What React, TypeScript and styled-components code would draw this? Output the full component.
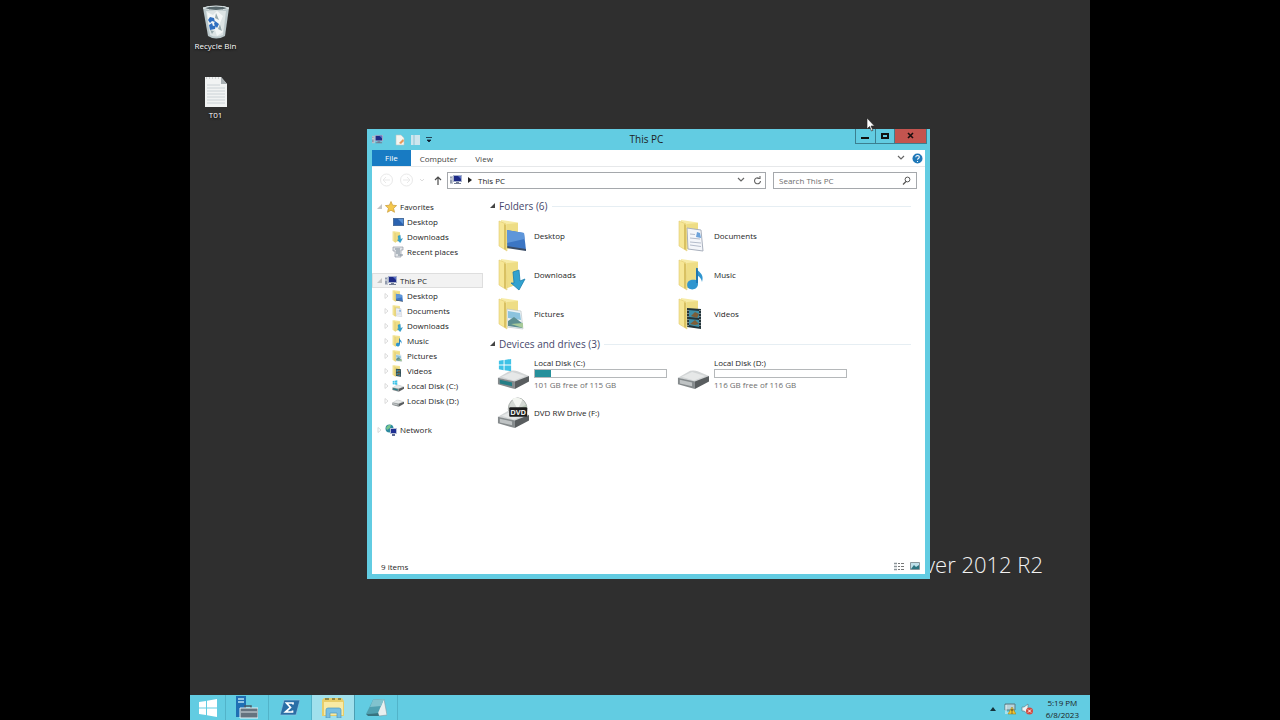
import React from 'react';
import styled, { createGlobalStyle } from 'styled-components';

const aero = '#62cce2';
const ink = '#1d1d1d';

const GlobalStyle = createGlobalStyle`
  * { box-sizing: border-box; }
  body { margin: 0; background: #000; font-family: "Open Sans", "Noto Sans", sans-serif; font-size: 8px; color: ${ink}; }
  button, input { font: inherit; color: inherit; }
  button { border: 0; padding: 0; background: none; }
  svg { display: block; flex: none; }
  ul { list-style: none; margin: 0; padding: 0; }
`;

const Screen = styled.div`
  display: flex;
  justify-content: center;
  height: 100vh;
`;

const Desktop = styled.main`
  position: relative;
  display: flex;
  flex-direction: column;
  height: 100%;
  aspect-ratio: 5 / 4;
  background: #2f2f2f;
  overflow: hidden;
`;

const Wallpaper = styled.div`
  position: absolute;
  right: 47px;
  bottom: 140px;
  font-size: 22px;
  line-height: 32px;
  font-weight: 300;
  white-space: nowrap;
  color: #f2f2f2;
`;

const Shortcuts = styled.div`
  flex: 1;
  display: flex;
  flex-direction: column;
  align-items: flex-start;
  gap: 20px;
  padding: 4px 0 0;
`;

const Shortcut = styled.button`
  display: flex;
  flex-direction: column;
  align-items: center;
  width: 51px;
  height: 49px;
  line-height: 12px;
  color: #fff;
  text-shadow: 0 1px 2px #000;
`;

const Win = styled.section`
  position: absolute;
  top: 129px;
  right: 160px;
  bottom: 141px;
  left: 177px;
  display: flex;
  flex-direction: column;
  padding: 0 5px 5px;
  background: ${aero};
`;

const TitleBar = styled.header`
  display: flex;
  flex: none;
  height: 21px;
`;

const QuickBar = styled.div`
  display: flex;
  align-items: center;
  gap: 6px;
  width: 66px;
`;

const Separator = styled.span`
  width: 1px;
  height: 8px;
  background: #52b0c6;
`;

const Title = styled.h1`
  flex: 1;
  margin: 0;
  font-size: 10px;
  line-height: 21px;
  font-weight: 400;
  text-align: center;
`;

const Controls = styled.div`
  display: flex;
  width: 72px;
  height: 15px;
  margin-right: -2px;
  border: 1px solid #3b7f90;
  border-top: 0;
`;

const Control = styled.button<{ $close?: boolean }>`
  display: flex;
  align-items: center;
  justify-content: center;
  flex: ${p => (p.$close ? 5 : 3)};
  background: ${p => (p.$close ? '#c3544f' : 'transparent')};
  & + & { border-left: 1px solid #3b7f90; }
`;

const Client = styled.div`
  flex: 1;
  min-height: 0;
  display: flex;
  flex-direction: column;
  background: #fff;
`;

const Ribbon = styled.nav`
  display: flex;
  align-items: center;
  flex: none;
  height: 17px;
  border-bottom: 1px solid #e6e8ea;
`;

const Tab = styled.button<{ $file?: boolean }>`
  height: 16px;
  padding: 0 ${p => (p.$file ? 13 : 9)}px;
  line-height: ${p => (p.$file ? 16 : 18)}px;
  background: ${p => (p.$file ? '#187bc3' : 'transparent')};
  color: ${p => (p.$file ? '#fff' : '#444')};
`;

const Spacer = styled.span`
  flex: 1;
`;

const IconButton = styled.button<{ $narrow?: boolean }>`
  display: flex;
  align-items: center;
  justify-content: center;
  width: ${p => (p.$narrow ? 8 : 16)}px;
  height: 16px;
`;

const AddressRow = styled.div`
  display: flex;
  align-items: center;
  flex: none;
  height: 26px;
  padding: 0 8px 0 6px;
`;

const Navigation = styled.div`
  display: flex;
  align-items: center;
  width: 69px;
  gap: 4px;
`;

const AddressBox = styled.div`
  display: flex;
  align-items: center;
  flex: 1;
  height: 17px;
  padding-left: 2px;
  border: 1px solid #a5a8ac;
`;

const Crumb = styled.button`
  padding: 0;
`;

const SearchBox = styled.label`
  display: flex;
  align-items: center;
  width: 144px;
  height: 17px;
  margin-left: 7px;
  padding: 0 5px;
  border: 1px solid #a5a8ac;
`;

const SearchInput = styled.input`
  flex: 1;
  min-width: 0;
  padding: 0;
  border: 0;
  outline: 0;
  background: none;
  &::placeholder { color: #6d6d6d; opacity: 1; }
`;

const Body = styled.div`
  flex: 1;
  min-height: 0;
  display: flex;
`;

const Sidebar = styled.nav`
  display: flex;
  flex-direction: column;
  flex: none;
  gap: 14px;
  width: 111px;
  padding-top: 6px;
`;

const TreeRow = styled.button<{ $child?: boolean; $selected?: boolean }>`
  display: flex;
  align-items: center;
  gap: 3px;
  width: 100%;
  height: 15px;
  padding-left: ${p => (p.$child ? 12 : 5)}px;
  white-space: nowrap;
  background: ${p => (p.$selected ? '#f2f2f2' : 'transparent')};
  box-shadow: ${p => (p.$selected ? 'inset 0 0 0 1px #dedede' : 'none')};
`;

const TreeIcon = styled.span`
  display: flex;
  align-items: center;
`;

const Content = styled.div`
  display: flex;
  flex-direction: column;
  gap: 1px;
  flex: 1;
  padding: 3px 14px 0 7px;
`;

const GroupHeader = styled.h2`
  display: flex;
  align-items: center;
  gap: 4px;
  height: 20px;
  margin: 0;
  font-size: 10px;
  font-weight: 400;
  color: #45476b;
  &::after { content: ""; flex: 1; height: 1px; background: #e6eef3; }
`;

const Tiles = styled.div`
  display: grid;
  grid-template-columns: repeat(auto-fill, 180px);
  grid-auto-rows: 39px;
  padding-left: 7px;
`;

const Tile = styled.button`
  display: flex;
  align-items: center;
  gap: 5px;
  text-align: left;
`;

const DriveText = styled.span`
  display: flex;
  flex-direction: column;
  gap: 1px;
  width: 133px;
  line-height: 11px;
`;

const Gauge = styled.span`
  height: 9px;
  border: 1px solid #b5b8ba;
  background: #fff;
`;

const GaugeFill = styled.span`
  display: block;
  height: 100%;
  background: #26909b;
`;

const Muted = styled.span`
  color: #6e6e6e;
`;

const StatusBar = styled.footer`
  display: flex;
  align-items: center;
  flex: none;
  height: 16px;
  padding: 0 2px 0 9px;
`;

const Taskbar = styled.footer`
  display: flex;
  flex: none;
  height: 25px;
  background: ${aero};
`;

const TaskButton = styled.button<{ $start?: boolean; $active?: boolean }>`
  display: flex;
  align-items: center;
  justify-content: center;
  width: ${p => (p.$start ? 36 : 43)}px;
  border-right: 1px solid ${p => (p.$active ? '#4b9fb3' : '#52b3c9')};
  background: ${p => (p.$active ? '#a0e0ec' : 'transparent')};
`;

const Tray = styled.div`
  display: flex;
  align-items: center;
  padding: 3px 11px 0 0;
`;

const TrayButton = styled.button`
  display: flex;
  align-items: center;
  justify-content: center;
  width: 17px;
  height: 20px;
`;

const Clock = styled.time`
  display: flex;
  flex-direction: column;
  align-items: center;
  margin-left: 10px;
  line-height: 12px;
`;

const Pointer = styled.svg`
  position: absolute;
  top: 117px;
  left: 676px;
`;

type Kind = 'desktop' | 'documents' | 'downloads' | 'music' | 'pictures' | 'videos';

const FolderIcon = ({ kind, size = 32 }: { kind: Kind; size?: number }) => (
  <svg width={size} height={size} viewBox="0 0 32 32" aria-hidden="true">
    <path d="M4 0 21 2.500V25L10 29 4 26Z" fill="#f7eba6" />
    <path d="M10 4 21 3V25L10 29Z" fill="#eedd85" />
    {kind === 'desktop' && (
      <>
        <path d="M10 10 27 13 29 30 10 27Z" fill="#3c76c4" />
        <path d="M10 10 27 13 27.500 19 10 23Z" fill="#5e96da" />
        <path d="M10 26 29 29V31L10 28Z" fill="#3a4c66" />
      </>
    )}
    {kind === 'documents' && (
      <>
        <path d="M10 8 24 10 26 31 11 29Z" fill="#f4f6fa" stroke="#a9b0bd" />
        <path d="M13 14 18 14.500M13 18 23 19M13 22 24 23M13 25 24 26.500" stroke="#b4bccb" fill="none" />
        <path d="m20 12 3 1 1 5-5-1Z" fill="#6ca2da" />
      </>
    )}
    {kind === 'downloads' && (
      <path d="M16 13 22 11 23 22 28 20 22 31 14 24 17 24Z" fill="#31a2cf" stroke="#1b7fae" strokeWidth=".8" />
    )}
    {kind === 'music' && (
      <>
        <path d="M19 8c1 5 9 6 6 15-1-5-4-6-4-6v8c0 7-11 7-11 1 0-5 5-6 9-5Z" fill="#3096d0" />
        <path d="M20 9v15" stroke="#1d6ea8" strokeWidth="1.500" />
      </>
    )}
    {kind === 'pictures' && (
      <>
        <path d="M10 11 24 13 26 31 10 29Z" fill="#eef3f5" stroke="#b7c1c6" strokeWidth=".6" />
        <path d="M11 13 23 15 24 22 11 20Z" fill="#8cc3de" />
        <path d="m11 23 6-4 8 6v5l-14-2Z" fill="#5d8f91" />
        <path d="M14 26 26 25V30Z" fill="#a8cb9a" />
      </>
    )}
    {kind === 'videos' && (
      <>
        <path d="M10 10 24 11V31L10 29Z" fill="#23343a" />
        <path d="M12 12 22 13V20L12 19ZM12 21 22 22V29L12 27Z" fill="#3e8fa8" />
        <path d="m14 18 4-4 4 2-2 4ZM13 26l5-4 4 4-4 1Z" fill="#7d5e38" />
        <path d="M11 12V29M23 12V30" stroke="#cfd8da" strokeDasharray="1 2" />
      </>
    )}
    <path d="M2 1 9 4 10 31 2 26Z" fill="#f6e695" stroke="#e0cb70" strokeWidth=".6" />
    <path d="M7 4 9 5V30L7 29Z" fill="#d9c162" />
  </svg>
);

const WindowsFlag = () => (
  <path d="M0 2 5 1V6H0ZM6 1 13 0V6H6ZM0 7H5V12L0 11ZM6 7H13V13L6 12Z" fill="#3fc2e6" />
);

const DriveIcon = ({ kind, size = 34 }: { kind: 'c' | 'd' | 'dvd'; size?: number }) => (
  <svg width={size} height={size} viewBox="0 0 34 34" aria-hidden="true">
    {kind === 'dvd' && (
      <>
        <ellipse cx="22" cy="13" rx="10" ry="12" fill="#d3d8d3" stroke="#a4aaa6" />
        <path d="M22 13 16 2q6-3 11 1Z" fill="#f3f6f1" />
        <path d="M22 13 31 8q2 5 0 10Z" fill="#b7c6b7" />
      </>
    )}
    <path d="M1 21 14 13.500Q19 13 22 14L34 19 19 26Z" fill="#d2d5d6" />
    <path d="M5 20 16 15 30 19 18 24Z" fill="#e6e8e8" />
    <path d="M1 21 19 25V33L1 28Z" fill="#858a8c" />
    <path d="M19 25 34 19V25L19 33Z" fill="#595d5f" />
    <path d="M3 23 16 26V30L3 27Z" fill={kind === 'c' ? '#247e86' : '#bfc3c4'} />
    {kind === 'c' && <g transform="translate(2 1)"><WindowsFlag /></g>}
    {kind === 'dvd' && (
      <>
        <rect x="13" y="11" width="19" height="10" rx="1" fill="#1b1b1b" />
        <text x="22.500" y="19" textAnchor="middle" fontSize="8" fontWeight="700" fill="#eee">DVD</text>
      </>
    )}
  </svg>
);

const ComputerIcon = ({ size = 12 }: { size?: number }) => (
  <svg width={size} height={size} viewBox="0 0 12 12" aria-hidden="true">
    <path d="M0 2h3v8H0Z" fill="#c3c8d2" />
    <path d="M1 3v1M1 6v3" stroke="#63708a" />
    <path d="M3 1h9v7H3Z" fill="#a7b1cc" />
    <path d="M4 2h7v5H4Z" fill="#1d2a86" />
    <path d="M8 2h3v3Z" fill="#5a70c4" />
    <path d="M6 8h3v1h2v1H4V9h2Z" fill="#727c94" />
  </svg>
);

const StarIcon = () => (
  <svg width="12" height="12" viewBox="0 0 12 12" aria-hidden="true">
    <path d="m6 .5 1.600 3.700 4 .4-3 2.700.9 4L6 9.200l-3.500 2.100.9-4-3-2.700 4-.4Z" fill="#f5c84c" stroke="#c99a35" strokeWidth=".7" />
  </svg>
);

const ScreenIcon = () => (
  <svg width="12" height="12" viewBox="0 0 12 12" aria-hidden="true">
    <path d="M1 2h11v8H1Z" fill="#4b6f9f" />
    <path d="M2 3h9v6H2Z" fill="#2a62b0" />
    <path d="M6 3h5v5Z" fill="#5b93d8" />
  </svg>
);

const RecentIcon = () => (
  <svg width="12" height="12" viewBox="0 0 12 12" aria-hidden="true">
    <path d="M1 1h10v3H9v7H3V5H1Z" fill="#e2e5e8" stroke="#929aa3" strokeWidth=".7" />
    <path d="M3 3h5M4 5h4M4 7h4M6 9h5" stroke="#7b8896" />
  </svg>
);

const NetworkIcon = () => (
  <svg width="12" height="12" viewBox="0 0 12 12" aria-hidden="true">
    <circle cx="4.500" cy="4.500" r="4" fill="#2d8a9f" />
    <path d="M1 4q2-4 5-3L5 4 2 6Z" fill="#78c58c" />
    <path d="M5 4h7v6H5Z" fill="#b6bfd8" />
    <path d="M6 5h5v4H6Z" fill="#1f2f93" />
    <path d="M7 10h3v2H7Z" fill="#5e6b94" />
  </svg>
);

const Chevron = () => (
  <svg width="8" height="6" viewBox="0 0 8 6" aria-hidden="true">
    <path d="m1 1 3 3 3-3" fill="none" stroke="#666" strokeWidth="1.200" />
  </svg>
);

const Twisty = ({ open, dark }: { open?: boolean; dark?: boolean }) => (
  <svg width="5" height="6" viewBox="0 0 5 6" aria-hidden="true">
    {open
      ? <path d="M5 0V5H0Z" fill={dark ? '#444' : '#c4c4c4'} />
      : <path d="M1 0.500 4 3 1 5.500Z" fill="none" stroke="#d2d2d2" strokeWidth=".8" />}
  </svg>
);

const NavCircle = ({ back }: { back?: boolean }) => (
  <svg width="17" height="14" viewBox="0 0 17 14" aria-hidden="true">
    <g fill="none" stroke="#e9e9e9">
      <circle cx="8.500" cy="7" r="6" />
      <path d={back ? 'M12 7H5M8 4 5 7l3 3' : 'M5 7h7M9 4l3 3-3 3'} />
    </g>
  </svg>
);

const kinds: [Kind, string][] = [
  ['desktop', 'Desktop'],
  ['documents', 'Documents'],
  ['downloads', 'Downloads'],
  ['music', 'Music'],
  ['pictures', 'Pictures'],
  ['videos', 'Videos'],
];

const TreeItem = ({ label, icon, child, selected, twisty }: {
  label: string;
  icon: React.ReactNode;
  child?: boolean;
  selected?: boolean;
  twisty?: 'open' | 'closed';
}) => (
  <li>
    <TreeRow $child={child} $selected={selected}>
      <TreeIcon>
        {twisty ? <Twisty open={twisty === 'open'} /> : <svg width="5" height="6" />}
      </TreeIcon>
      <TreeIcon>{icon}</TreeIcon>
      {label}
    </TreeRow>
  </li>
);

const Drive = ({ kind, label, free, used }: { kind: 'c' | 'd'; label: string; free: string; used: number }) => (
  <Tile>
    <DriveIcon kind={kind} size={32} />
    <DriveText>
      <span>{label}</span>
      <Gauge><GaugeFill style={{ width: `${used}%` }} /></Gauge>
      <Muted>{free}</Muted>
    </DriveText>
  </Tile>
);

export default function App() {
  return (
    <Screen>
      <GlobalStyle />
      <Desktop>
        <Wallpaper>Windows Server 2012 R2</Wallpaper>
        <Shortcuts>
          <Shortcut>
            <svg width="28" height="36" viewBox="0 0 28 36" aria-hidden="true">
              <path d="M1 4 6 2 22 2 27 4 23 32Q14 37 6 32Z" fill="#b9c6c9" />
              <path d="M4 7 24 7 21 31Q14 34 8 31Z" fill="#dce3e4" />
              <path d="m5 8 6 3 4-4 6 5-3 7 3 9-6 4-2-6-5 2Z" fill="#f3f6f6" />
              <path d="m14 9 3 7-4-2ZM18 20l2 7-4-2ZM8 26l4 1-2 3Z" fill="#98aaae" />
              <path d="M1 4Q14 0 27 4 14 9 1 4Z" fill="#56656a" stroke="#dce5e6" />
              <path d="m8 13 4 1 1 4-3-1-2 2-2-3ZM7 21l3-2 1 3 3-1-1 4-5 1ZM13 17l4 3-2 4-3-4Z" fill="#2f6fc0" />
            </svg>
            Recycle Bin
          </Shortcut>
          <Shortcut>
            <svg width="28" height="36" viewBox="0 0 28 36" aria-hidden="true">
              <path d="M3 4H19L25 11V34H3Z" fill="#f1f3f3" />
              <path d="M19 4V11H25Z" fill="#a9b0b3" />
              <path d="M5 12H18M5 15H23M5 18H23M5 21H23M5 24H23M5 27H23M5 30H23" stroke="#cbd2d6" />
              <path d="M4 5H18" stroke="#adb3b5" strokeDasharray="1 2" />
            </svg>
            T01
          </Shortcut>
        </Shortcuts>

        <Win>
          <TitleBar>
            <QuickBar>
              <ComputerIcon size={11} />
              <Separator />
              <svg width="10" height="12" viewBox="0 0 10 12" aria-hidden="true">
                <path d="M1 1h5l3 3v7H1Z" fill="#f5f5f0" stroke="#b6c6c6" strokeWidth=".6" />
                <path d="M4 9 8 5l1 2-3 3Z" fill="#e79a5b" />
              </svg>
              <svg width="9" height="12" viewBox="0 0 9 12" aria-hidden="true">
                <path d="M0 1h9v10H0Z" fill="#cde6ee" />
                <path d="M3 1v10" stroke="#8fc4d4" />
              </svg>
              <svg width="6" height="6" viewBox="0 0 6 6" aria-hidden="true">
                <path d="M0 .5h6M1 3h4L3 5Z" fill="#123" stroke="#123" strokeWidth=".8" />
              </svg>
              <Separator />
            </QuickBar>
            <Title>This PC</Title>
            <Controls>
              <Control aria-label="Minimize">
                <svg width="8" height="8" viewBox="0 0 8 8"><path d="M0 5h8v2H0Z" fill="#111" /></svg>
              </Control>
              <Control aria-label="Maximize">
                <svg width="8" height="8" viewBox="0 0 8 8"><path d="M1 2h6v4H1Z" fill="none" stroke="#111" strokeWidth="2" /></svg>
              </Control>
              <Control $close aria-label="Close">
                <svg width="8" height="8" viewBox="0 0 8 8"><path d="m1 1 5 5M6 1 1 6" stroke="#1a0f0f" strokeWidth="1.600" /></svg>
              </Control>
            </Controls>
          </TitleBar>

          <Client>
            <Ribbon>
              <Tab $file>File</Tab>
              <Tab>Computer</Tab>
              <Tab>View</Tab>
              <Spacer />
              <IconButton aria-label="Expand ribbon"><Chevron /></IconButton>
              <IconButton aria-label="Help">
                <svg width="11" height="11" viewBox="0 0 11 11">
                  <circle cx="5.500" cy="5.500" r="5" fill="#1f78b8" />
                  <path d="M3.700 4.200q.2-1.700 1.900-1.700 1.700.1 1.700 1.500 0 1-1 1.500-.7.400-.7 1.200M5.500 8v1" fill="none" stroke="#fff" strokeWidth="1.100" />
                </svg>
              </IconButton>
            </Ribbon>

            <AddressRow>
              <Navigation>
                <IconButton aria-label="Back"><NavCircle back /></IconButton>
                <IconButton aria-label="Forward"><NavCircle /></IconButton>
                <IconButton $narrow aria-label="Recent locations">
                  <svg width="6" height="4" viewBox="0 0 6 4"><path d="m1 1 2 2 2-2" fill="none" stroke="#ddd" /></svg>
                </IconButton>
                <IconButton aria-label="Up">
                  <svg width="8" height="9" viewBox="0 0 8 9"><path d="M4 9V1M1 4l3-3 3 3" fill="none" stroke="#4c4c4c" strokeWidth="1.200" /></svg>
                </IconButton>
              </Navigation>
              <AddressBox>
                <ComputerIcon />
                <IconButton aria-label="Show locations">
                  <svg width="4" height="6" viewBox="0 0 4 6"><path d="m0 0 4 3-4 3Z" fill="#222" /></svg>
                </IconButton>
                <Crumb>This PC</Crumb>
                <Spacer />
                <IconButton aria-label="Previous locations"><Chevron /></IconButton>
                <IconButton aria-label="Refresh">
                  <svg width="9" height="9" viewBox="0 0 9 9">
                    <path d="M6 2.200A3 3 0 1 0 7.500 5M4.500 2.500H7V0" fill="none" stroke="#666" strokeWidth="1.100" />
                  </svg>
                </IconButton>
              </AddressBox>
              <SearchBox>
                <SearchInput type="text" aria-label="Search This PC" placeholder="Search This PC" />
                <svg width="9" height="9" viewBox="0 0 9 9" aria-hidden="true">
                  <circle cx="5.500" cy="3.500" r="2.400" fill="none" stroke="#555" />
                  <path d="M4 5.500 1 8.500" stroke="#555" strokeWidth="1.300" />
                </svg>
              </SearchBox>
            </AddressRow>

            <Body>
              <Sidebar aria-label="Navigation pane">
                <ul>
                  <TreeItem label="Favorites" icon={<StarIcon />} twisty="open" />
                  <TreeItem child label="Desktop" icon={<ScreenIcon />} />
                  <TreeItem child label="Downloads" icon={<FolderIcon kind="downloads" size={12} />} />
                  <TreeItem child label="Recent places" icon={<RecentIcon />} />
                </ul>
                <ul>
                  <TreeItem selected label="This PC" icon={<ComputerIcon />} twisty="open" />
                  {kinds.map(([kind, label]) => (
                    <TreeItem key={kind} child label={label} icon={<FolderIcon kind={kind} size={12} />} twisty="closed" />
                  ))}
                  <TreeItem child label="Local Disk (C:)" icon={<DriveIcon kind="c" size={12} />} twisty="closed" />
                  <TreeItem child label="Local Disk (D:)" icon={<DriveIcon kind="d" size={12} />} twisty="closed" />
                </ul>
                <ul>
                  <TreeItem label="Network" icon={<NetworkIcon />} twisty="closed" />
                </ul>
              </Sidebar>

              <Content>
                <section>
                  <GroupHeader><Twisty open dark />Folders (6)</GroupHeader>
                  <Tiles>
                    {kinds.map(([kind, label]) => (
                      <Tile key={kind}><FolderIcon kind={kind} />{label}</Tile>
                    ))}
                  </Tiles>
                </section>
                <section>
                  <GroupHeader><Twisty open dark />Devices and drives (3)</GroupHeader>
                  <Tiles>
                    <Drive kind="c" label="Local Disk (C:)" free="101 GB free of 115 GB" used={12} />
                    <Drive kind="d" label="Local Disk (D:)" free="116 GB free of 116 GB" used={0} />
                    <Tile><DriveIcon kind="dvd" size={32} />DVD RW Drive (F:)</Tile>
                  </Tiles>
                </section>
              </Content>
            </Body>

            <StatusBar>
              9 items
              <Spacer />
              <IconButton aria-label="Details view">
                <svg width="10" height="9" viewBox="0 0 10 9">
                  <path d="M0 1.500h3M0 4.500h3M0 7.500h3" stroke="#8b9499" strokeWidth="1.500" />
                  <path d="M4 1.500h2M7 1.500h3M4 4.500h2M7 4.500h3M4 7.500h2M7 7.500h3" stroke="#777" />
                </svg>
              </IconButton>
              <IconButton aria-label="Large icons view">
                <svg width="10" height="8" viewBox="0 0 10 8">
                  <path d="M.5.5h9v7h-9Z" fill="#bfe0ea" stroke="#8a979c" />
                  <path d="m1 7 3-4 2 2 3-2v4Z" fill="#2c7480" />
                </svg>
              </IconButton>
            </StatusBar>
          </Client>
        </Win>

        <Taskbar>
          <TaskButton $start aria-label="Start">
            <svg width="18" height="18" viewBox="0 0 18 18">
              <path d="M0 3 7 2V8.500H0ZM8 1.800 18 0V8.500H8ZM0 9.500H7V16L0 15ZM8 9.500H18V18L8 16.200Z" fill="#fff" />
            </svg>
          </TaskButton>
          <TaskButton aria-label="Server Manager">
            <svg width="22" height="23" viewBox="0 0 22 23">
              <path d="M0 0H10V21H0Z" fill="#1f6fb4" />
              <path d="M2 3H8M2 6H8" stroke="#b9e3f4" strokeWidth="1.500" />
              <path d="M9 12v-2h6v2" fill="none" stroke="#4b5a66" strokeWidth="1.500" />
              <path d="M4 12H22V22H4Z" fill="#65737f" stroke="#e4f3f8" />
              <path d="M5 16H21" stroke="#d6dfe4" />
            </svg>
          </TaskButton>
          <TaskButton aria-label="PowerShell">
            <svg width="20" height="17" viewBox="0 0 20 17">
              <path d="M4 1H20L16 16H0Z" fill="#2a6ea6" stroke="#8cc4e2" strokeWidth=".7" />
              <path d="M13 5.500V4H6.500L10.500 8.500 5.500 13H12.500V11.500" fill="none" stroke="#fff" strokeWidth="1.700" />
            </svg>
          </TaskButton>
          <TaskButton $active aria-label="File Explorer">
            <svg width="24" height="21" viewBox="0 0 24 21">
              <path d="M1 3 3 1H21L23 4V19H1Z" fill="#e8cd68" />
              <path d="M3 5H22V18H3Z" fill="#f8eaa4" />
              <path d="M4 2H8M11 2H14M17 2H20" stroke="#77743c" strokeWidth="1.500" />
              <path d="M5 21V13q0-2 2-2H18q2 0 2 2V21H16V16H9V21Z" fill="#78bfe2" stroke="#4f99c0" strokeWidth=".7" />
            </svg>
          </TaskButton>
          <TaskButton aria-label="Registry">
            <svg width="21" height="18" viewBox="0 0 21 18">
              <path d="M7 1 18 0 21 16 13 17Z" fill="#e8efef" stroke="#7f9aa2" strokeWidth=".6" />
              <path d="M7 1 18 0 12 14 0 15Z" fill="#4fa0b0" />
              <path d="M7 1 18 0 15 7 4 8Z" fill="#81c3ce" />
              <path d="M0 15 12 14 13 17 2 17Z" fill="#38737f" />
            </svg>
          </TaskButton>
          <Spacer />
          <Tray>
            <TrayButton aria-label="Show hidden icons">
              <svg width="6" height="4" viewBox="0 0 6 4"><path d="m0 4 3-4 3 4Z" fill="#15323a" /></svg>
            </TrayButton>
            <TrayButton aria-label="Network">
              <svg width="12" height="12" viewBox="0 0 12 12">
                <path d="M1 1h10v6H1Z" fill="#b7d3da" stroke="#5b7880" />
                <path d="M2 2v7M1 10h5" stroke="#eef4f5" />
                <path d="m8 4 4 7H4Z" fill="#f3c531" stroke="#8e7518" strokeWidth=".5" />
                <path d="M8 6v2.500M8 9.500v1" stroke="#222" />
              </svg>
            </TrayButton>
            <TrayButton aria-label="Volume muted">
              <svg width="12" height="12" viewBox="0 0 12 12">
                <path d="M1 4h2l4-3v10L3 8H1Z" fill="#eef3f4" stroke="#62818a" strokeWidth=".7" />
                <circle cx="8.500" cy="8" r="3.500" fill="#d24a40" />
                <path d="m7 6.500 3 3M10 6.500l-3 3" stroke="#fff" />
              </svg>
            </TrayButton>
            <Clock>
              <span>5:19 PM</span>
              <span>6/8/2023</span>
            </Clock>
          </Tray>
        </Taskbar>

        <Pointer width="9" height="15" viewBox="0 0 9 15" aria-hidden="true">
          <path d="M1 1V12L3.500 9.500 5.500 14 7 13.300 5 9H8.500Z" fill="#fff" stroke="#222" strokeWidth=".6" />
        </Pointer>
      </Desktop>
    </Screen>
  );
}
